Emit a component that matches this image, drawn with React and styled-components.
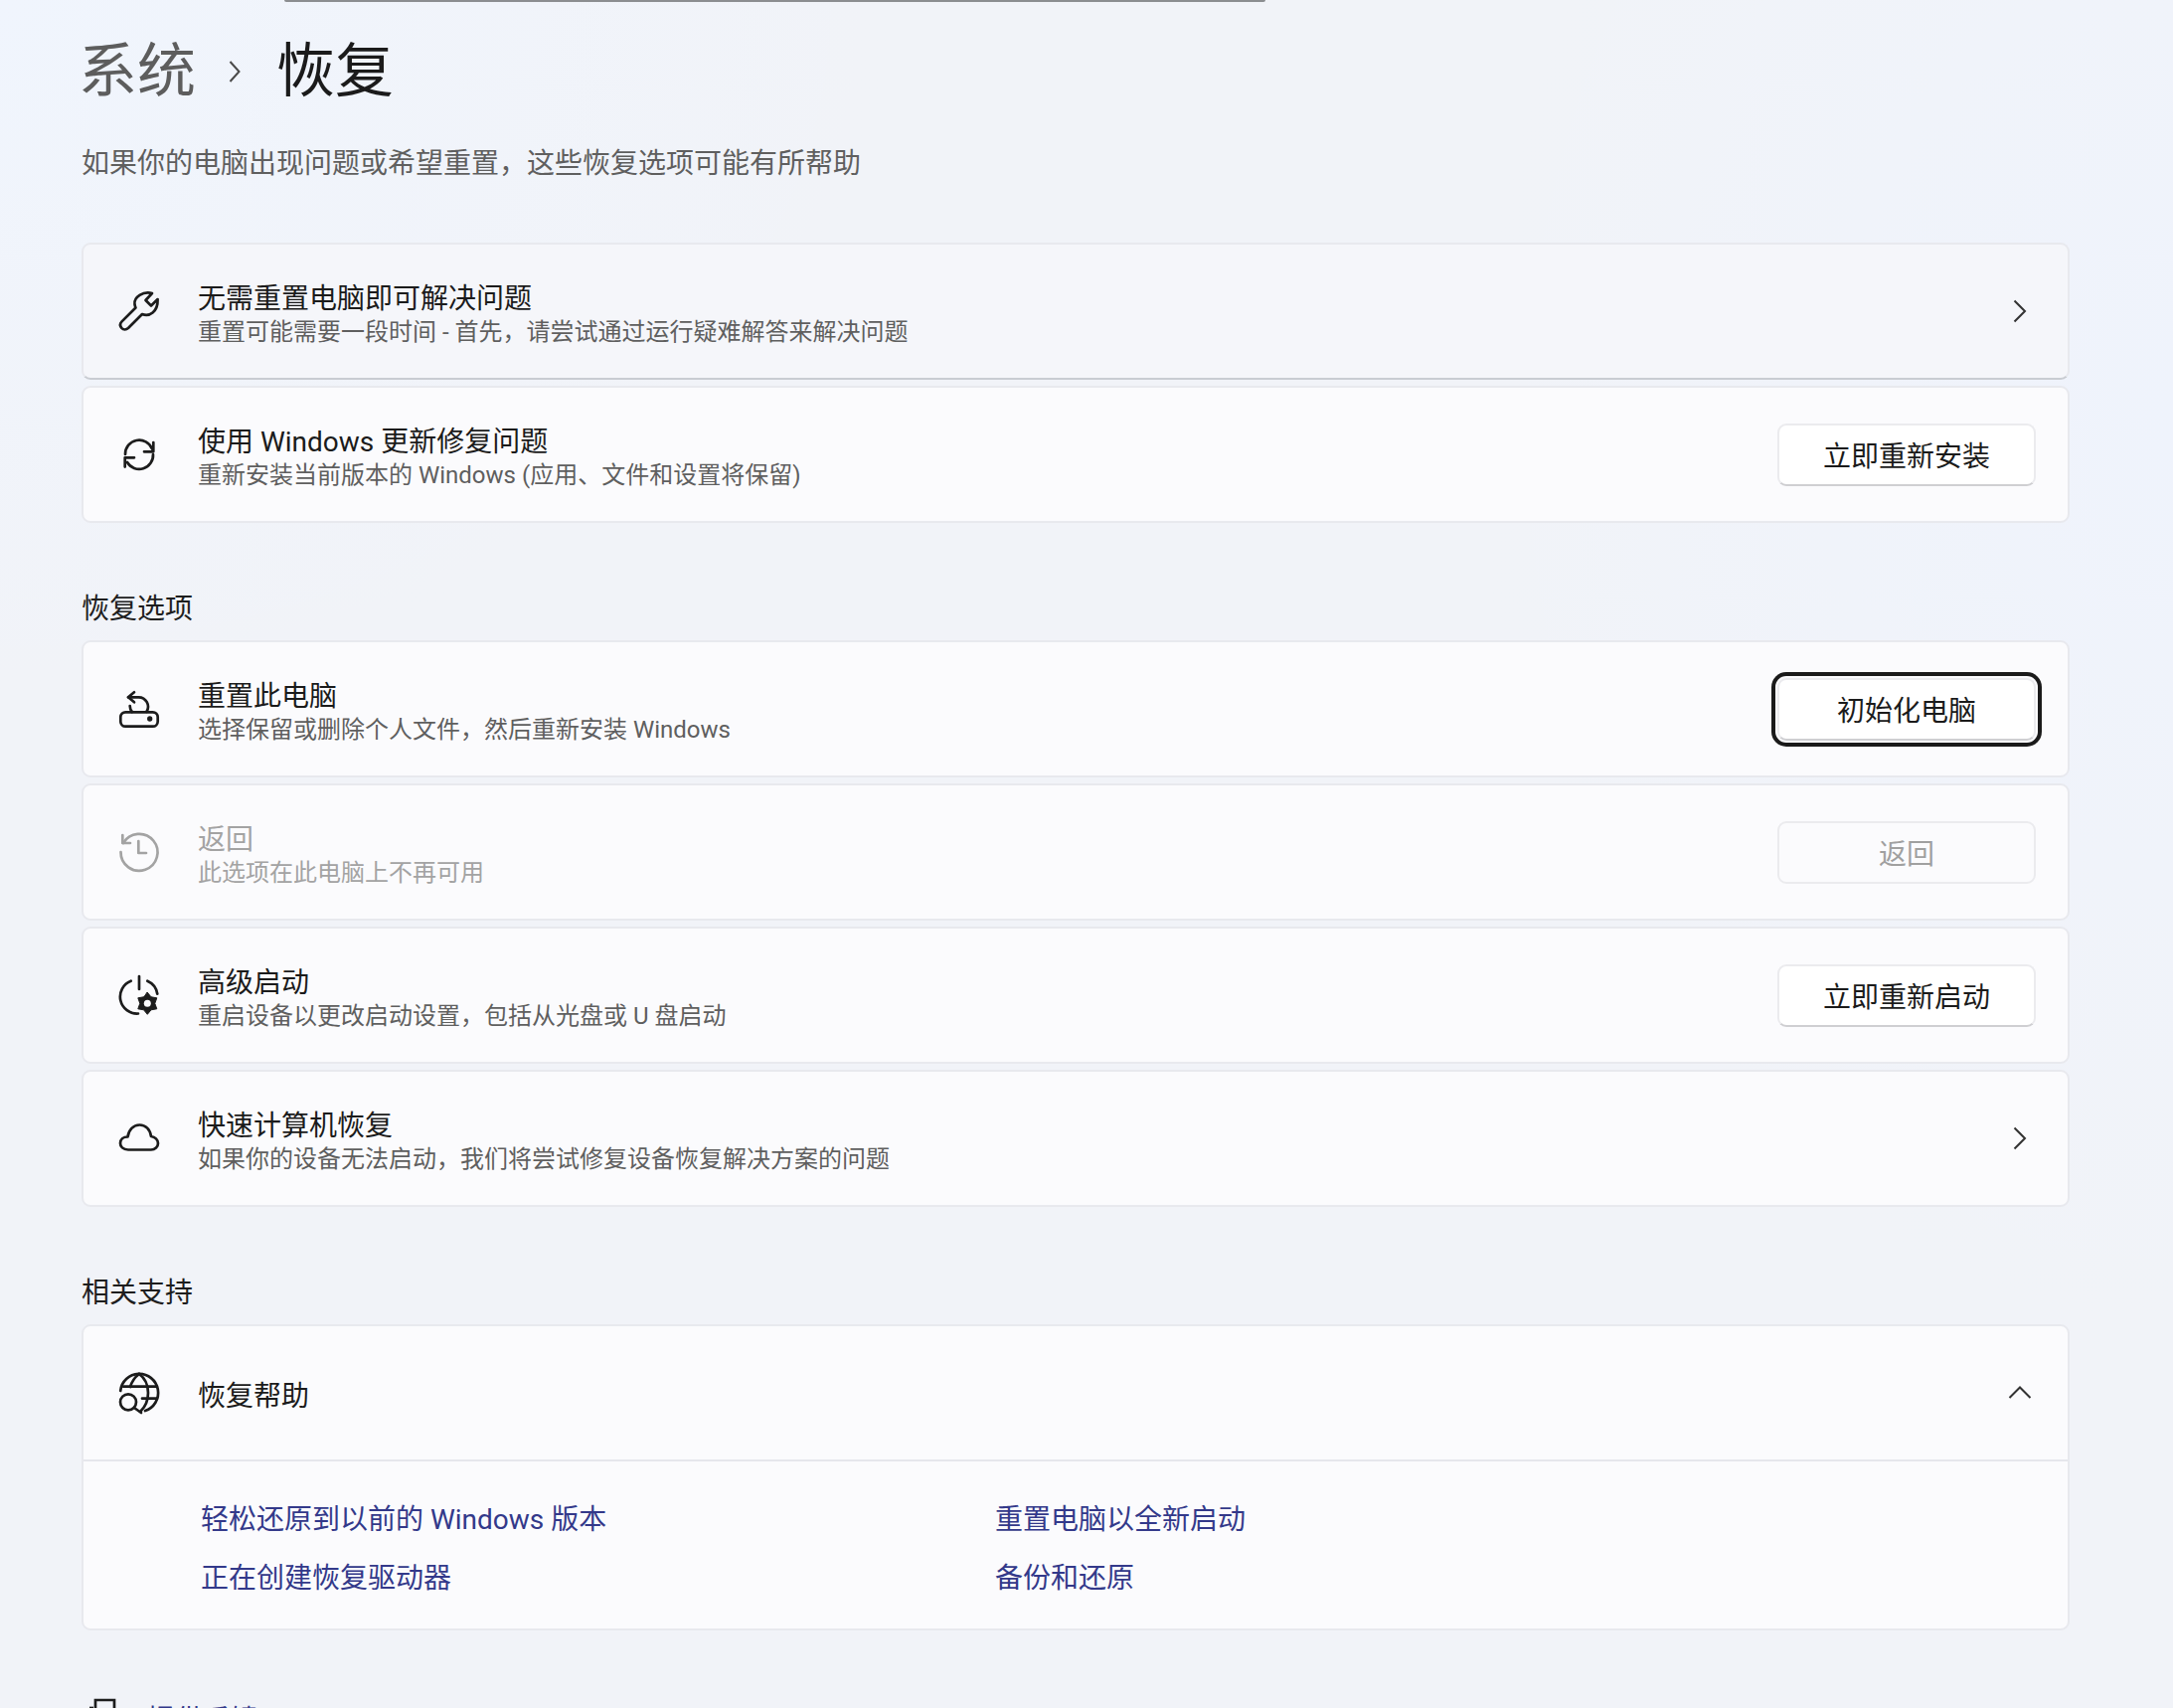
import React from "react";
import styled, { createGlobalStyle } from "styled-components";

const GlobalStyle = createGlobalStyle`
  html, body {
    margin: 0;
    padding: 0;
    background: #f1f3f8;
  }
  * {
    box-sizing: border-box;
  }
`;

const Page = styled.div`
  width: 2186px;
  height: 1718px;
  overflow: hidden;
  padding: 0 104px 0 82px;
  font-family: Roboto, "Noto Sans CJK SC", sans-serif;
  color: #1a1a1a;
  background:
    radial-gradient(900px 700px at 0 0, #f0f5fd 0%, rgba(240, 245, 253, 0) 100%),
    radial-gradient(700px 900px at 100% 25%, #eff3fc 0%, rgba(239, 243, 252, 0) 100%),
    #f1f3f8;
`;

const TopStrip = styled.div`
  height: 2px;
  width: 987px;
  margin-left: 204px;
  background: #8b8d90;
  border-radius: 0 0 2px 2px;
`;

const Heading = styled.div`
  display: flex;
  align-items: center;
  margin: 32px 0 0 -3px;
  height: 76px;
  font-size: 59px;
  line-height: 76px;
  font-weight: 400;
`;

const Crumb = styled.span`
  color: ${(p) => (p.$current ? "#1b1b1b" : "#5d5d5d")};
`;

const CrumbArrow = styled.svg`
  width: 12px;
  height: 24px;
  margin: 0 36px 0 33px;
  fill: none;
  stroke: #4a4a4a;
  stroke-width: 2;
`;

const Intro = styled.p`
  margin: 35px 0 59px;
  font-size: 28px;
  line-height: 40px;
  color: #5f5f5f;
`;

const SectionTitle = styled.h2`
  margin: 69px 0 13px;
  font-size: 28px;
  line-height: 36px;
  font-weight: 400;
  color: #1e1e1e;
`;

const Stack = styled.div`
  display: flex;
  flex-direction: column;
  gap: 6px;
`;

const Row = styled.div`
  display: flex;
  align-items: center;
  height: 138px;
  padding: 0 32px 0 36px;
  background: ${(p) => (p.$hover ? "#f5f6fa" : "#fbfbfd")};
  border: 2px solid #e8e9ee;
  border-bottom-color: ${(p) => (p.$hover ? "#c9ccd2" : "#e8e9ee")};
  border-radius: 9px;
`;

const IconBox = styled.svg`
  flex: none;
  width: 40px;
  height: 40px;
  margin-right: 39px;
  overflow: visible;
  fill: none;
  stroke: ${(p) => (p.$muted ? "#a3a3a3" : "#1c1c1c")};
  stroke-width: 2.7;
  stroke-linecap: round;
  stroke-linejoin: round;
`;

const TextBlock = styled.div`
  flex: 1;
  min-width: 0;
  padding-top: 6px;
`;

const RowTitle = styled.div`
  font-size: 28px;
  line-height: 35px;
  color: ${(p) => (p.$muted ? "#a3a3a3" : "#1b1b1b")};
`;

const RowHint = styled.div`
  font-size: 24px;
  line-height: 32px;
  color: ${(p) => (p.$muted ? "#a3a3a3" : "#5f5f5f")};
`;

const Button = styled.button`
  width: 260px;
  height: 63px;
  padding: 0;
  font: inherit;
  font-size: 28px;
  color: ${(p) => (p.disabled ? "#a0a0a0" : "#1b1b1b")};
  background: ${(p) => (p.disabled ? "transparent" : "#ffffff")};
  border: 2px solid #ebebee;
  border-bottom-color: ${(p) => (p.disabled ? "#ebebee" : "#cfcfd2")};
  border-radius: 9px;
  box-shadow: ${(p) => (p.$focused ? "0 0 0 2px #fbfbfd, 0 0 0 6px #1a1a1a" : "none")};
`;

const ChevronBox = styled.svg`
  flex: none;
  width: 30px;
  height: 30px;
  margin-right: 1px;
  fill: none;
  stroke: #333;
  stroke-width: 2;
`;

const Expander = styled.div`
  background: #fbfbfd;
  border: 2px solid #e8e9ee;
  border-radius: 9px;
`;

const ExpanderHead = styled.div`
  display: flex;
  align-items: center;
  height: 136px;
  padding: 0 32px 0 36px;
  border-bottom: 2px solid #e6e7ec;
`;

const LinkGrid = styled.div`
  display: grid;
  grid-template-columns: 799px auto;
  justify-content: start;
  row-gap: 19px;
  padding: 39px 0 30px 118px;
`;

const HelpLink = styled.a`
  font-size: 28px;
  line-height: 40px;
  color: #33398a;
  text-decoration: none;
`;

const Feedback = styled.div`
  display: flex;
  align-items: flex-start;
  margin-top: 68px;
  padding-left: 6px;
`;

const FeedbackLink = styled(HelpLink)`
  margin-top: 3px;
`;

const FeedbackIcon = styled.svg`
  flex: none;
  width: 40px;
  height: 40px;
  margin-right: 20px;
  fill: none;
  stroke: #1c1c1c;
  stroke-width: 2.7;
`;

const Chevron = ({ up }) => (
  <ChevronBox viewBox="0 0 30 30">
    {up ? <path d="M4.500 20 15 9.500 25.500 20" /> : <path d="M9.500 4.500 20 15 9.500 25.500" />}
  </ChevronBox>
);

const WrenchIcon = () => (
  <IconBox viewBox="0 0 40 40">
    <path d="M33 2C24-.5 14.500 6 15.500 13c.2 1.500.5 2.500 1 3.500L2.600 30.400c-2 2-1.800 4.600-.3 6.400 1.900 2.100 4.700 2 6.700.2L23 23c7 3 16-2 15.600-15L32 14.500 26.500 9Z" />
  </IconBox>
);

const SyncIcon = () => (
  <IconBox viewBox="0 0 40 40">
    <path d="M6 20A14 14 0 0 1 33 14.500" />
    <path d="M25 17.300h9.300V8" />
    <path d="M34 20A14 14 0 0 1 8 28" />
    <path d="M15 23.300H5.700v9.300" />
  </IconBox>
);

const ResetIcon = () => (
  <IconBox viewBox="0 0 40 40">
    <rect x="1.300" y="23.300" width="37.400" height="14.400" rx="5" />
    <circle cx="30.700" cy="30" r="1.300" />
    <path d="M15 3.300 9 8.300l6 5" />
    <path d="M9 8.300h10.500a9.500 9.500 0 0 1 8 14.500" />
    <path d="M10.700 17c0 2.500.8 4.500 2.200 6" />
  </IconBox>
);

const HistoryIcon = () => (
  <IconBox viewBox="0 0 40 40" $muted>
    <path d="M3.300 3v8H11" />
    <path d="M4 11A18.500 18.500 0 1 1 1.500 20" />
    <path d="M19.300 9v12H27" />
  </IconBox>
);

const StartupIcon = () => (
  <IconBox viewBox="0 0 40 40">
    <path d="M20 1v13" />
    <path d="M11.700 5.700A17 17 0 0 0 19 38.500" />
    <path d="M28.300 5.700a17 17 0 0 1 10 13" />
    <path
      d="M28.300 17.300 32 21.800l5.800 1 -2 5.500 2 5.500 -5.800 1-3.700 4.500-3.700-4.500-5.800-1 2-5.500-2-5.500 5.800-1Z"
      fill="#1c1c1c"
      strokeWidth="1"
    />
    <circle cx="28.300" cy="28.300" r="3.500" fill="#fbfbfd" stroke="none" />
  </IconBox>
);

const CloudIcon = () => (
  <IconBox viewBox="0 0 40 40">
    <path d="M9 31.500C3.500 31.500 1 28 1 25c0-4 3-6.500 7.500-6.500 1-7 5.500-12 12-12 6 0 10.500 4.500 11.500 11.500 4 .5 7 3.500 7 7 0 3.500-3 6.500-7 6.500Z" />
  </IconBox>
);

const GlobeIcon = () => (
  <IconBox viewBox="0 0 40 40">
    <path d="M1.200 18A19 19 0 1 1 26 38" />
    <path d="M20 1c-4 3-7.500 8-9 13" />
    <path d="M20 1c5.500 4 9 11 9 19s-3 14-7.500 18.500" />
    <path d="M4 13.700h32.500" />
    <path d="M23 25.700h15" />
    <circle cx="9" cy="29.300" r="8" />
    <path d="m15 35 7 5" />
  </IconBox>
);

const App = () => (
  <Page>
    <GlobalStyle />
    <TopStrip />
    <Heading>
      <Crumb>系统</Crumb>
      <CrumbArrow viewBox="0 0 12 24">
        <path d="M1.500 2 10.500 12 1.500 22" />
      </CrumbArrow>
      <Crumb $current>恢复</Crumb>
    </Heading>
    <Intro>如果你的电脑出现问题或希望重置，这些恢复选项可能有所帮助</Intro>

    <Stack>
      <Row $hover>
        <WrenchIcon />
        <TextBlock>
          <RowTitle>无需重置电脑即可解决问题</RowTitle>
          <RowHint>重置可能需要一段时间 - 首先，请尝试通过运行疑难解答来解决问题</RowHint>
        </TextBlock>
        <Chevron />
      </Row>
      <Row>
        <SyncIcon />
        <TextBlock>
          <RowTitle>使用 Windows 更新修复问题</RowTitle>
          <RowHint>重新安装当前版本的 Windows (应用、文件和设置将保留)</RowHint>
        </TextBlock>
        <Button>立即重新安装</Button>
      </Row>
    </Stack>

    <SectionTitle>恢复选项</SectionTitle>
    <Stack>
      <Row>
        <ResetIcon />
        <TextBlock>
          <RowTitle>重置此电脑</RowTitle>
          <RowHint>选择保留或删除个人文件，然后重新安装 Windows</RowHint>
        </TextBlock>
        <Button $focused>初始化电脑</Button>
      </Row>
      <Row>
        <HistoryIcon />
        <TextBlock>
          <RowTitle $muted>返回</RowTitle>
          <RowHint $muted>此选项在此电脑上不再可用</RowHint>
        </TextBlock>
        <Button disabled>返回</Button>
      </Row>
      <Row>
        <StartupIcon />
        <TextBlock>
          <RowTitle>高级启动</RowTitle>
          <RowHint>重启设备以更改启动设置，包括从光盘或 U 盘启动</RowHint>
        </TextBlock>
        <Button>立即重新启动</Button>
      </Row>
      <Row>
        <CloudIcon />
        <TextBlock>
          <RowTitle>快速计算机恢复</RowTitle>
          <RowHint>如果你的设备无法启动，我们将尝试修复设备恢复解决方案的问题</RowHint>
        </TextBlock>
        <Chevron />
      </Row>
    </Stack>

    <SectionTitle>相关支持</SectionTitle>
    <Expander>
      <ExpanderHead>
        <GlobeIcon />
        <TextBlock>
          <RowTitle>恢复帮助</RowTitle>
        </TextBlock>
        <Chevron up />
      </ExpanderHead>
      <LinkGrid>
        <HelpLink href="#">轻松还原到以前的 Windows 版本</HelpLink>
        <HelpLink href="#">重置电脑以全新启动</HelpLink>
        <HelpLink href="#">正在创建恢复驱动器</HelpLink>
        <HelpLink href="#">备份和还原</HelpLink>
      </LinkGrid>
    </Expander>

    <Feedback>
      <FeedbackIcon viewBox="0 0 40 40">
        <path d="M8 12V2h19v20" />
        <path d="M2 10h4" />
      </FeedbackIcon>
      <FeedbackLink href="#">提供反馈</FeedbackLink>
    </Feedback>
  </Page>
);

export default App;
